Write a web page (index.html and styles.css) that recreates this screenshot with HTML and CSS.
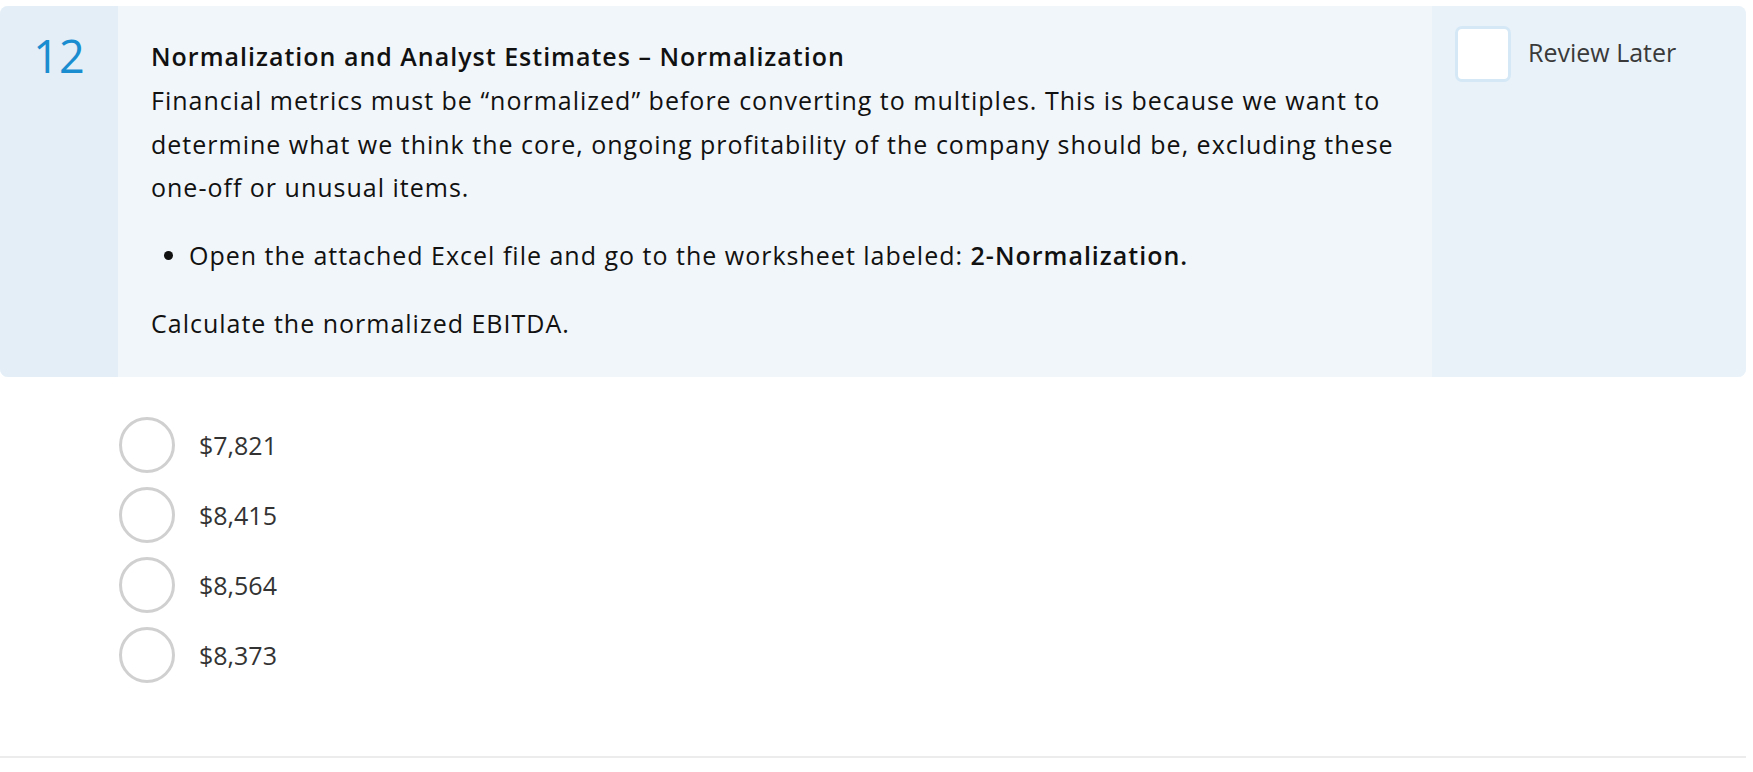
FILE: index.html
```html
<!DOCTYPE html>
<html lang="en">
<head>
<meta charset="utf-8">
<title>Question 12</title>
<link rel="stylesheet" href="styles.css">
</head>
<body>
<div class="page">
  <section class="question-card">
    <div class="q-num">12</div>
    <div class="q-body">
      <p class="q-title">Normalization and Analyst Estimates – Normalization</p>
      <p class="q-text">Financial metrics must be “normalized” before converting to multiples. This is because we want to determine what we think the core, ongoing profitability of the company should be, excluding these one-off or unusual items.</p>
      <ul class="q-list">
        <li>Open the attached Excel file and go to the worksheet labeled: <strong>2-Normalization.</strong></li>
      </ul>
      <p class="q-text">Calculate the normalized EBITDA.</p>
    </div>
    <div class="q-side">
      <label class="review">
        <span class="checkbox"></span>
        <span class="review-label">Review Later</span>
      </label>
    </div>
  </section>
  <ul class="options">
    <li class="option"><span class="radio"></span><span class="option-label">$7,821</span></li>
    <li class="option"><span class="radio"></span><span class="option-label">$8,415</span></li>
    <li class="option"><span class="radio"></span><span class="option-label">$8,564</span></li>
    <li class="option"><span class="radio"></span><span class="option-label">$8,373</span></li>
  </ul>
  <div class="divider"></div>
</div>
</body>
</html>
```
FILE: styles.css
```css
html, body {
  margin: 0;
  padding: 0;
  background: #ffffff;
}
body {
  font-family: "Open Sans", "Noto Sans", "Liberation Sans", sans-serif;
  color: #111111;
}
.page {
  padding: 6px 7px 0 0;
}
.question-card {
  display: flex;
  border-radius: 8px;
  overflow: hidden;
  background: #f1f6fa;
}
.q-num {
  width: 118px;
  flex: none;
  background: #e3eef7;
  color: #1a8dd0;
  font-size: 45px;
  font-weight: 500;
  line-height: 1;
  text-align: center;
  padding-top: 27px;
  box-sizing: border-box;
}
.q-body {
  flex: 1;
  padding: 29px 33px 31px 33px;
  font-size: 25px;
  line-height: 1.75;
  letter-spacing: 1px;
}
.q-body p {
  margin: 0;
}
.q-title {
  font-weight: 600;
}
.q-list {
  margin: 24px 0;
  padding-left: 38px;
}
.q-list strong {
  font-weight: 600;
}
.q-side {
  width: 314px;
  flex: none;
  background: #e9f2f9;
  padding: 20px 0 0 23px;
  box-sizing: border-box;
}
.review {
  display: flex;
  align-items: center;
  gap: 17px;
}
.checkbox {
  width: 56px;
  height: 56px;
  box-sizing: border-box;
  border: 3px solid #d5e8f6;
  border-radius: 7px;
  background: #ffffff;
}
.review-label {
  font-size: 25px;
  color: #3a3a3a;
  padding-bottom: 5px;
}
.options {
  list-style: none;
  margin: 40px 0 0 0;
  padding: 0 0 0 119px;
  display: flex;
  flex-direction: column;
  gap: 14px;
}
.option {
  display: flex;
  align-items: center;
  gap: 24px;
}
.radio {
  width: 56px;
  height: 56px;
  box-sizing: border-box;
  border: 3px solid #d0d0d0;
  border-radius: 50%;
  background: #ffffff;
}
.option-label {
  font-size: 25px;
  color: #333333;
}
.divider {
  margin-top: 73px;
  height: 2px;
  background: #ececec;
}
```
